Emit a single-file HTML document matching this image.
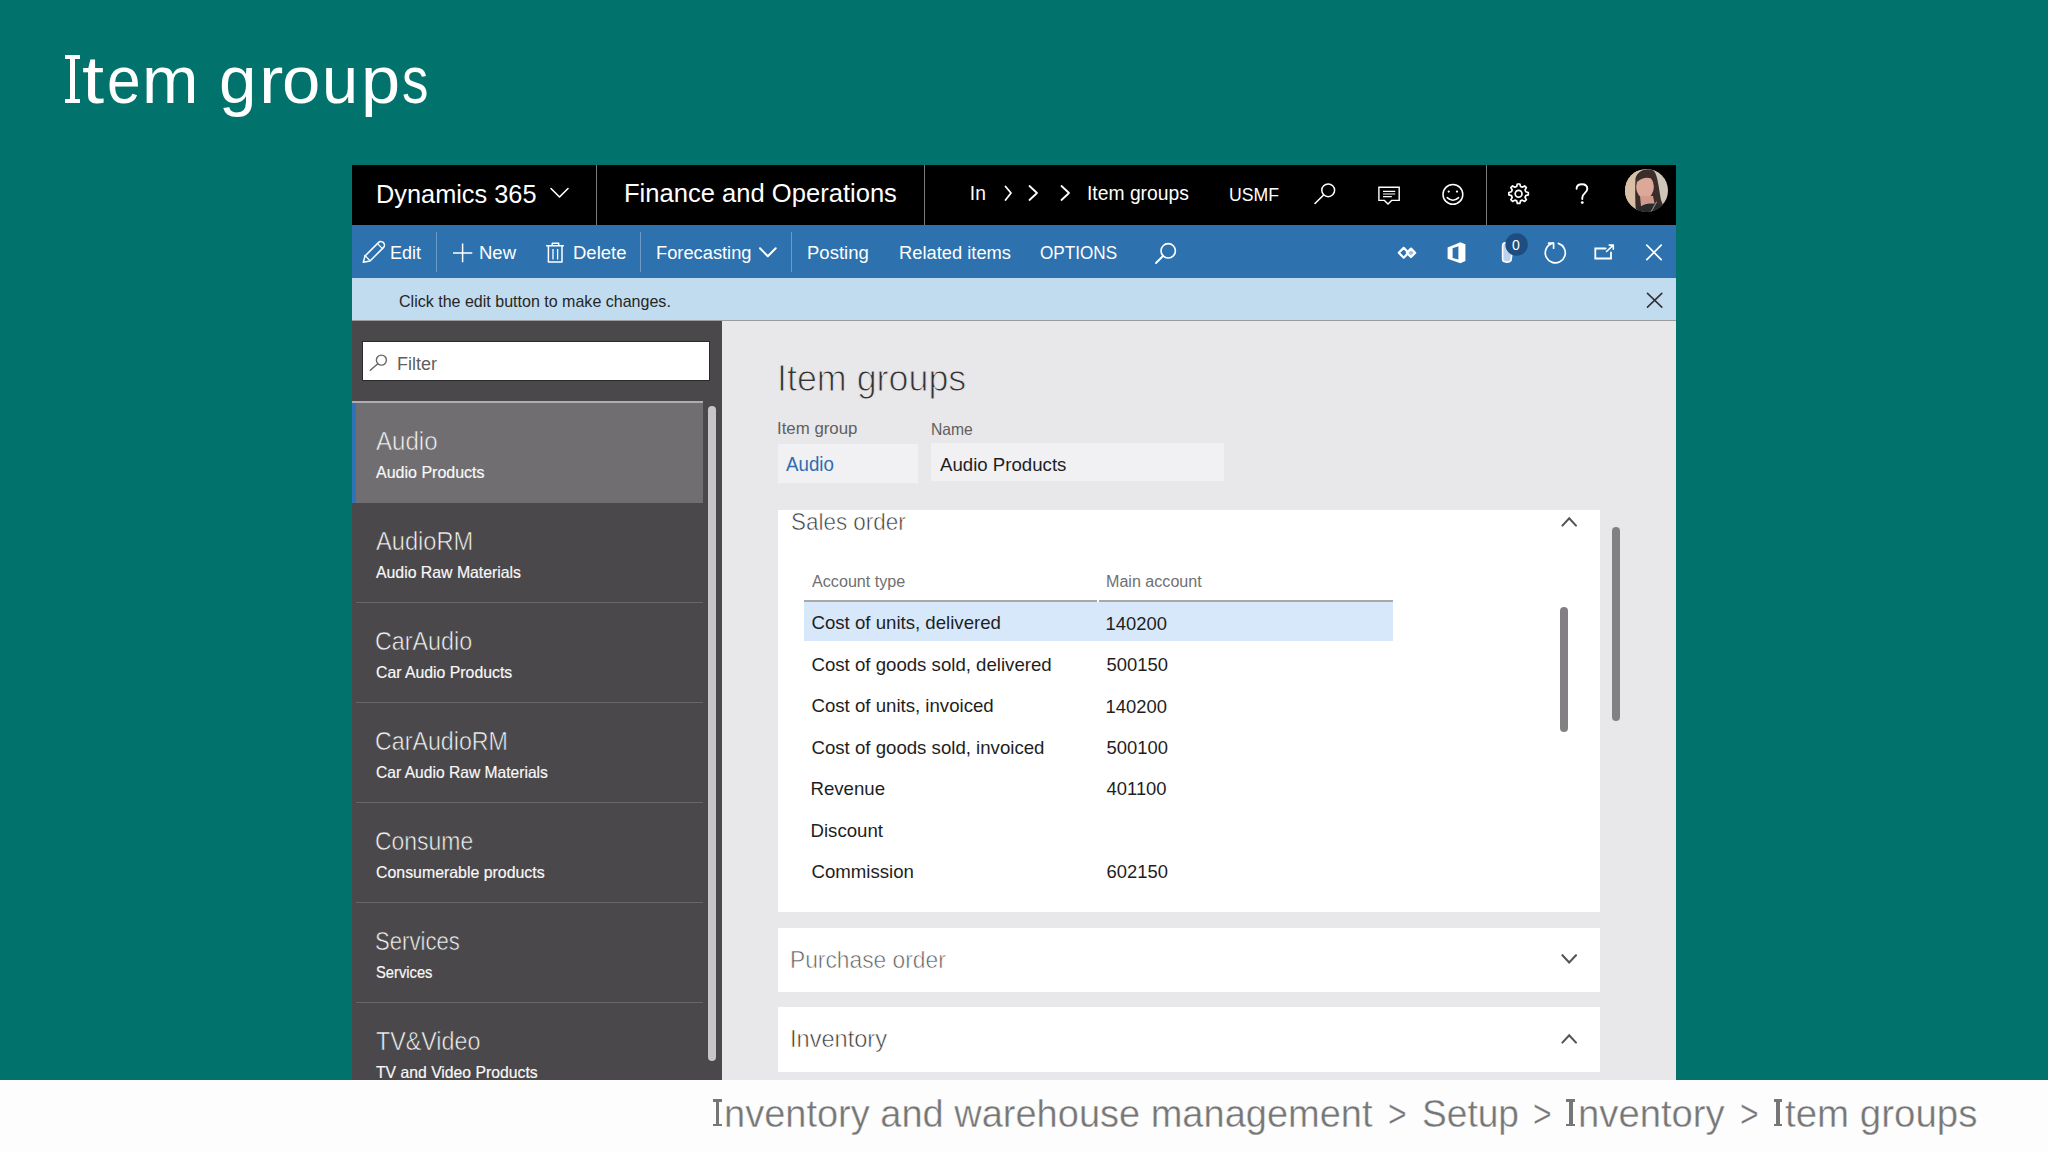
<!DOCTYPE html>
<html><head><meta charset="utf-8"><title>Item groups</title>
<style>
html,body{margin:0;padding:0;width:2048px;height:1152px;overflow:hidden;background:#01726C;}
body{position:relative;font-family:"Liberation Sans",sans-serif;}
.t{position:absolute;white-space:nowrap;font-family:"Liberation Sans",sans-serif;}
svg{position:absolute;overflow:visible;}
</style></head><body>
<div style="position:absolute;left:0px;top:0px;width:2048px;height:1080px;background:#01726C;"></div>
<div style="position:absolute;left:64.9px;top:54.9px;width:15.1px;height:4px;background:#FFFFFF;"></div>
<div style="position:absolute;left:64.9px;top:99.3px;width:15.1px;height:3.9px;background:#FFFFFF;"></div>
<div style="position:absolute;left:70.2px;top:54.9px;width:4.8px;height:48.3px;background:#FFFFFF;"></div>
<div class="t" style="left:81.79px;top:46.53px;font-size:66px;line-height:66px;color:#FFFFFF;font-weight:400;transform:scaleX(1.2059);transform-origin:0 0;">t</div>
<div class="t" style="left:106.57px;top:46.53px;font-size:66px;line-height:66px;color:#FFFFFF;font-weight:400;transform:scaleX(0.9156);transform-origin:0 0;">e</div>
<div class="t" style="left:141.89px;top:46.53px;font-size:66px;line-height:66px;color:#FFFFFF;font-weight:400;transform:scaleX(1.0277);transform-origin:0 0;">m</div>
<div class="t" style="left:219.16px;top:46.53px;font-size:66px;line-height:66px;color:#FFFFFF;font-weight:400;transform:scaleX(1.0194);transform-origin:0 0;">g</div>
<div class="t" style="left:258.58px;top:46.53px;font-size:66px;line-height:66px;color:#FFFFFF;font-weight:400;transform:scaleX(1.1059);transform-origin:0 0;">r</div>
<div class="t" style="left:282.41px;top:46.53px;font-size:66px;line-height:66px;color:#FFFFFF;font-weight:400;transform:scaleX(1.0437);transform-origin:0 0;">o</div>
<div class="t" style="left:321.87px;top:46.53px;font-size:66px;line-height:66px;color:#FFFFFF;font-weight:400;transform:scaleX(0.9828);transform-origin:0 0;">u</div>
<div class="t" style="left:360.93px;top:46.53px;font-size:66px;line-height:66px;color:#FFFFFF;font-weight:400;transform:scaleX(1.0667);transform-origin:0 0;">p</div>
<div class="t" style="left:402.20px;top:46.53px;font-size:66px;line-height:66px;color:#FFFFFF;font-weight:400;transform:scaleX(0.8000);transform-origin:0 0;">s</div>
<div style="position:absolute;left:352px;top:165px;width:1324px;height:60px;background:#000000;"></div>
<div style="position:absolute;left:352px;top:225px;width:1324px;height:53px;background:#2D72AE;"></div>
<div style="position:absolute;left:352px;top:278px;width:1324px;height:42px;background:#C1DBEF;"></div>
<div style="position:absolute;left:352px;top:320px;width:1324px;height:1px;background:#9C9C9C;"></div>
<div style="position:absolute;left:352px;top:321px;width:370px;height:759px;background:#4A484A;"></div>
<div style="position:absolute;left:722px;top:321px;width:954px;height:759px;background:#E8E7EA;"></div>
<div class="t" style="left:376.40px;top:181.72px;font-size:25.3px;line-height:25.3px;color:#FFFFFF;font-weight:400;transform:scaleX(1.0012);transform-origin:0 0;">Dynamics 365</div>
<div style="position:absolute;left:596px;top:165px;width:1px;height:60px;background:#7A7A7A;"></div>
<div class="t" style="left:624.20px;top:181.00px;font-size:25.56px;line-height:25.56px;color:#FFFFFF;font-weight:400;transform:scaleX(1.0008);transform-origin:0 0;">Finance and Operations</div>
<div style="position:absolute;left:924px;top:165px;width:1px;height:60px;background:#7A7A7A;"></div>
<div class="t" style="left:969.80px;top:184.39px;font-size:19.3px;line-height:19.3px;color:#FFFFFF;font-weight:400;">In</div>
<div class="t" style="left:1086.61px;top:184.29px;font-size:19.42px;line-height:19.42px;color:#FFFFFF;font-weight:400;transform:scaleX(0.9944);transform-origin:0 0;">Item groups</div>
<div class="t" style="left:1229.08px;top:185.28px;font-size:19.2px;line-height:19.2px;color:#FFFFFF;font-weight:400;transform:scaleX(0.9195);transform-origin:0 0;">USMF</div>
<div style="position:absolute;left:1486px;top:165px;width:1px;height:60px;background:#7A7A7A;"></div>
<div class="t" style="left:390.47px;top:243.28px;font-size:19.2px;line-height:19.2px;color:#FFFFFF;font-weight:400;transform:scaleX(0.9349);transform-origin:0 0;">Edit</div>
<div class="t" style="left:479.24px;top:243.18px;font-size:19.2px;line-height:19.2px;color:#FFFFFF;font-weight:400;transform:scaleX(0.9646);transform-origin:0 0;">New</div>
<div class="t" style="left:572.64px;top:243.18px;font-size:19.2px;line-height:19.2px;color:#FFFFFF;font-weight:400;transform:scaleX(0.9648);transform-origin:0 0;">Delete</div>
<div class="t" style="left:656.35px;top:243.18px;font-size:19.2px;line-height:19.2px;color:#FFFFFF;font-weight:400;transform:scaleX(0.9526);transform-origin:0 0;">Forecasting</div>
<div class="t" style="left:807.44px;top:243.48px;font-size:19.2px;line-height:19.2px;color:#FFFFFF;font-weight:400;transform:scaleX(0.9643);transform-origin:0 0;">Posting</div>
<div class="t" style="left:898.75px;top:243.48px;font-size:19.2px;line-height:19.2px;color:#FFFFFF;font-weight:400;transform:scaleX(0.9549);transform-origin:0 0;">Related items</div>
<div class="t" style="left:1040.30px;top:243.48px;font-size:19.2px;line-height:19.2px;color:#FFFFFF;font-weight:400;transform:scaleX(0.8930);transform-origin:0 0;">OPTIONS</div>
<div style="position:absolute;left:436px;top:232px;width:1px;height:40px;background:#6F9BC8;"></div>
<div style="position:absolute;left:640px;top:232px;width:1px;height:40px;background:#6F9BC8;"></div>
<div style="position:absolute;left:791px;top:232px;width:1px;height:40px;background:#6F9BC8;"></div>
<div class="t" style="left:399.20px;top:293.24px;font-size:16.4px;line-height:16.4px;color:#262626;font-weight:400;transform:scaleX(0.9782);transform-origin:0 0;">Click the edit button to make changes.</div>
<div style="position:absolute;left:362.6px;top:341.9px;width:346px;height:38.4px;background:#FFFFFF;box-shadow:0 0 0 1px #2a2a2a;"></div>
<div class="t" style="left:396.96px;top:353.88px;font-size:19.2px;line-height:19.2px;color:#5E5E5E;font-weight:400;transform:scaleX(0.9397);transform-origin:0 0;">Filter</div>
<div style="position:absolute;left:352px;top:401px;width:351px;height:102px;background:#706E70;"></div>
<div style="position:absolute;left:352px;top:401px;width:351px;height:2px;background:#ADACAE;"></div>
<div style="position:absolute;left:352px;top:403px;width:4px;height:100px;background:#2E72B8;"></div>
<div class="t" style="left:375.80px;top:428.95px;font-size:25.5px;line-height:25.5px;color:#F4F4F4;font-weight:400;-webkit-text-stroke:0.6px #706E70;transform:scaleX(0.9441);transform-origin:0 0;">Audio</div>
<div class="t" style="left:375.80px;top:464.26px;font-size:16.5px;line-height:16.5px;color:#F8F8F8;font-weight:400;-webkit-text-stroke:0.2px #F8F8F8;transform:scaleX(0.9700);transform-origin:0 0;">Audio Products</div>
<div class="t" style="left:375.80px;top:528.95px;font-size:25.5px;line-height:25.5px;color:#F4F4F4;font-weight:400;-webkit-text-stroke:0.6px #4A484A;transform:scaleX(0.9273);transform-origin:0 0;">AudioRM</div>
<div class="t" style="left:375.80px;top:564.26px;font-size:16.5px;line-height:16.5px;color:#F8F8F8;font-weight:400;-webkit-text-stroke:0.2px #F8F8F8;transform:scaleX(0.9585);transform-origin:0 0;">Audio Raw Materials</div>
<div style="position:absolute;left:356px;top:602px;width:347px;height:1px;background:#68666A;"></div>
<div class="t" style="left:374.89px;top:628.95px;font-size:25.5px;line-height:25.5px;color:#F4F4F4;font-weight:400;-webkit-text-stroke:0.6px #4A484A;transform:scaleX(0.9141);transform-origin:0 0;">CarAudio</div>
<div class="t" style="left:375.80px;top:664.26px;font-size:16.5px;line-height:16.5px;color:#F8F8F8;font-weight:400;-webkit-text-stroke:0.2px #F8F8F8;transform:scaleX(0.9579);transform-origin:0 0;">Car Audio Products</div>
<div style="position:absolute;left:356px;top:702px;width:347px;height:1px;background:#68666A;"></div>
<div class="t" style="left:374.89px;top:728.95px;font-size:25.5px;line-height:25.5px;color:#F4F4F4;font-weight:400;-webkit-text-stroke:0.6px #4A484A;transform:scaleX(0.9108);transform-origin:0 0;">CarAudioRM</div>
<div class="t" style="left:375.80px;top:764.26px;font-size:16.5px;line-height:16.5px;color:#F8F8F8;font-weight:400;-webkit-text-stroke:0.2px #F8F8F8;transform:scaleX(0.9466);transform-origin:0 0;">Car Audio Raw Materials</div>
<div style="position:absolute;left:356px;top:802px;width:347px;height:1px;background:#68666A;"></div>
<div class="t" style="left:374.90px;top:828.95px;font-size:25.5px;line-height:25.5px;color:#F4F4F4;font-weight:400;-webkit-text-stroke:0.6px #4A484A;transform:scaleX(0.9004);transform-origin:0 0;">Consume</div>
<div class="t" style="left:375.80px;top:864.26px;font-size:16.5px;line-height:16.5px;color:#F8F8F8;font-weight:400;-webkit-text-stroke:0.2px #F8F8F8;transform:scaleX(0.9627);transform-origin:0 0;">Consumerable products</div>
<div style="position:absolute;left:356px;top:902px;width:347px;height:1px;background:#68666A;"></div>
<div class="t" style="left:374.93px;top:928.95px;font-size:25.5px;line-height:25.5px;color:#F4F4F4;font-weight:400;-webkit-text-stroke:0.6px #4A484A;transform:scaleX(0.8674);transform-origin:0 0;">Services</div>
<div class="t" style="left:375.80px;top:964.26px;font-size:16.5px;line-height:16.5px;color:#F8F8F8;font-weight:400;-webkit-text-stroke:0.2px #F8F8F8;transform:scaleX(0.8918);transform-origin:0 0;">Services</div>
<div style="position:absolute;left:356px;top:1002px;width:347px;height:1px;background:#68666A;"></div>
<div class="t" style="left:375.80px;top:1028.95px;font-size:25.5px;line-height:25.5px;color:#F4F4F4;font-weight:400;-webkit-text-stroke:0.6px #4A484A;transform:scaleX(0.9127);transform-origin:0 0;">TV&amp;Video</div>
<div class="t" style="left:375.80px;top:1064.26px;font-size:16.5px;line-height:16.5px;color:#F8F8F8;font-weight:400;-webkit-text-stroke:0.2px #F8F8F8;transform:scaleX(0.9543);transform-origin:0 0;">TV and Video Products</div>
<div style="position:absolute;left:708px;top:406px;width:8px;height:655px;background:#C6C5C8;border-radius:4px;"></div>
<div class="t" style="left:776.53px;top:359.71px;font-size:37.5px;line-height:37.5px;color:#333333;font-weight:400;-webkit-text-stroke:1.0px #E8E7EA;transform:scaleX(0.9559);transform-origin:0 0;">Item groups</div>
<div class="t" style="left:776.61px;top:420.86px;font-size:16.97px;line-height:16.97px;color:#606060;font-weight:400;transform:scaleX(0.9923);transform-origin:0 0;">Item group</div>
<div class="t" style="left:931.05px;top:421.26px;font-size:16.5px;line-height:16.5px;color:#606060;font-weight:400;transform:scaleX(0.9501);transform-origin:0 0;">Name</div>
<div style="position:absolute;left:777.5px;top:443.5px;width:140px;height:39.5px;background:#F1F0F3;"></div>
<div style="position:absolute;left:931px;top:442.8px;width:293px;height:38.6px;background:#F1F0F3;"></div>
<div class="t" style="left:786.10px;top:455.04px;font-size:19.6px;line-height:19.6px;color:#2F6DB1;font-weight:400;transform:scaleX(0.9559);transform-origin:0 0;">Audio</div>
<div class="t" style="left:939.60px;top:455.38px;font-size:19.2px;line-height:19.2px;color:#1E1E1E;font-weight:400;transform:scaleX(0.9712);transform-origin:0 0;">Audio Products</div>
<div style="position:absolute;left:777.5px;top:509.5px;width:822.3px;height:402.8px;background:#FFFFFF;"></div>
<div class="t" style="left:790.68px;top:509.90px;font-size:24.5px;line-height:24.5px;color:#3A3A3A;font-weight:400;-webkit-text-stroke:0.6px #FFFFFF;transform:scaleX(0.9160);transform-origin:0 0;">Sales order</div>
<div class="t" style="left:811.50px;top:574.12px;font-size:15.6px;line-height:15.6px;color:#707070;font-weight:400;transform:scaleX(1.0349);transform-origin:0 0;">Account type</div>
<div class="t" style="left:1105.57px;top:574.22px;font-size:15.6px;line-height:15.6px;color:#707070;font-weight:400;transform:scaleX(1.0323);transform-origin:0 0;">Main account</div>
<div style="position:absolute;left:804px;top:600px;width:292.6px;height:2px;background:#A8A8A8;"></div>
<div style="position:absolute;left:1098.6px;top:600px;width:294.8px;height:2px;background:#A8A8A8;"></div>
<div style="position:absolute;left:804px;top:602px;width:589.4px;height:39px;background:#D8E8FB;"></div>
<div class="t" style="left:811.50px;top:614.45px;font-size:18.64px;line-height:18.64px;color:#1E1E1E;font-weight:400;">Cost of units, delivered</div>
<div class="t" style="left:1105.60px;top:614.66px;font-size:18.39px;line-height:18.39px;color:#1E1E1E;font-weight:400;">140200</div>
<div class="t" style="left:811.50px;top:655.90px;font-size:18.64px;line-height:18.64px;color:#1E1E1E;font-weight:400;">Cost of goods sold, delivered</div>
<div class="t" style="left:1106.60px;top:656.11px;font-size:18.39px;line-height:18.39px;color:#1E1E1E;font-weight:400;">500150</div>
<div class="t" style="left:811.50px;top:697.35px;font-size:18.64px;line-height:18.64px;color:#1E1E1E;font-weight:400;">Cost of units, invoiced</div>
<div class="t" style="left:1105.60px;top:697.56px;font-size:18.39px;line-height:18.39px;color:#1E1E1E;font-weight:400;">140200</div>
<div class="t" style="left:811.50px;top:738.80px;font-size:18.64px;line-height:18.64px;color:#1E1E1E;font-weight:400;">Cost of goods sold, invoiced</div>
<div class="t" style="left:1106.60px;top:739.01px;font-size:18.39px;line-height:18.39px;color:#1E1E1E;font-weight:400;">500100</div>
<div class="t" style="left:810.50px;top:780.25px;font-size:18.64px;line-height:18.64px;color:#1E1E1E;font-weight:400;">Revenue</div>
<div class="t" style="left:1106.60px;top:780.46px;font-size:18.39px;line-height:18.39px;color:#1E1E1E;font-weight:400;">401100</div>
<div class="t" style="left:810.50px;top:821.70px;font-size:18.64px;line-height:18.64px;color:#1E1E1E;font-weight:400;">Discount</div>
<div class="t" style="left:811.50px;top:863.15px;font-size:18.64px;line-height:18.64px;color:#1E1E1E;font-weight:400;">Commission</div>
<div class="t" style="left:1106.60px;top:863.36px;font-size:18.39px;line-height:18.39px;color:#1E1E1E;font-weight:400;">602150</div>
<div style="position:absolute;left:1560px;top:607px;width:8px;height:125.2px;background:#828083;border-radius:4px;"></div>
<div style="position:absolute;left:1612px;top:527px;width:8px;height:193.5px;background:#828083;border-radius:4px;"></div>
<div style="position:absolute;left:777.5px;top:927.5px;width:822.3px;height:64.3px;background:#FFFFFF;"></div>
<div class="t" style="left:790.14px;top:947.80px;font-size:24.5px;line-height:24.5px;color:#606060;font-weight:400;-webkit-text-stroke:0.6px #FFFFFF;transform:scaleX(0.9296);transform-origin:0 0;">Purchase order</div>
<div style="position:absolute;left:777.5px;top:1006.7px;width:822.3px;height:65px;background:#FFFFFF;"></div>
<div class="t" style="left:790.07px;top:1026.70px;font-size:24.5px;line-height:24.5px;color:#3A3A3A;font-weight:400;-webkit-text-stroke:0.6px #FFFFFF;transform:scaleX(0.9626);transform-origin:0 0;">Inventory</div>
<svg width="2048" height="1152" viewBox="0 0 2048 1152" style="left:0;top:0;" fill="none" stroke-linecap="round" stroke-linejoin="round">
 <!-- top bar -->
 <g stroke="#FFFFFF" stroke-width="1.6">
  <path d="M551 188.5 L559.5 197 L568 188.5"/>
  <path d="M1005.5 186.5 L1011 193 L1005.5 200" stroke-width="1.8"/>
  <path d="M1029.5 186 L1037 193 L1029.5 200" stroke-width="1.8"/>
  <path d="M1061.5 186 L1069 193 L1061.5 200" stroke-width="1.8"/>
  <circle cx="1328.2" cy="190.3" r="6.4" stroke-width="1.5"/>
  <path d="M1323.6 195 L1315 203.5" stroke-width="1.6"/>
  <path d="M1378.9 187.2 H1399.2 V200.4 H1391.6 L1388 204 L1384.4 200.4 H1378.9 Z" stroke-width="1.4" stroke-linejoin="miter"/>
  <path d="M1383 191.3 H1395.2 M1383 194 H1395.2 M1383 196.7 H1391.8" stroke-width="1.2" stroke-linecap="butt"/>
  <circle cx="1452.9" cy="194.4" r="9.9" stroke-width="1.5"/>
  <path d="M1447.2 197.6 Q1452.9 203 1458.6 197.6" stroke-width="1.5"/>
  <circle cx="1448.7" cy="191.6" r="1.1" fill="#fff" stroke="none"/>
  <circle cx="1457" cy="191.6" r="1.1" fill="#fff" stroke="none"/>
  <circle cx="1518.6" cy="193.7" r="3.4" stroke-width="1.7"/>
  <path d="M1517.37 183.98 L1519.83 183.98 L1520.55 186.56 L1522.27 187.27 L1524.61 185.96 L1526.34 187.69 L1525.03 190.03 L1525.74 191.75 L1528.32 192.47 L1528.32 194.93 L1525.74 195.65 L1525.03 197.37 L1526.34 199.71 L1524.61 201.44 L1522.27 200.13 L1520.55 200.84 L1519.83 203.42 L1517.37 203.42 L1516.65 200.84 L1514.93 200.13 L1512.59 201.44 L1510.86 199.71 L1512.17 197.37 L1511.46 195.65 L1508.88 194.93 L1508.88 192.47 L1511.46 191.75 L1512.17 190.03 L1510.86 187.69 L1512.59 185.96 L1514.93 187.27 L1516.65 186.56 Z" stroke-width="1.7"/>
  <path d="M1576.6 188.8 C1576.6 185.5 1579 184.3 1582 184.3 C1585.3 184.3 1587.3 186.3 1587.3 189 C1587.3 192.6 1582.3 193.8 1582.3 197.5 V199" stroke-width="1.9"/>
  <circle cx="1582.3" cy="202.6" r="1.4" fill="#fff" stroke="none"/>
 </g>
 <!-- avatar -->
 <defs>
  <clipPath id="av"><circle cx="1646.5" cy="190.4" r="21.5"/></clipPath>
  <radialGradient id="face" cx="0.5" cy="0.45" r="0.5"><stop offset="0" stop-color="#e2a08c"/><stop offset="0.7" stop-color="#c98b76"/><stop offset="1" stop-color="#9c6a5a"/></radialGradient>
 </defs>
 <g clip-path="url(#av)" stroke="none">
  <rect x="1625" y="168" width="44" height="45" fill="#cdc6b8"/>
  <rect x="1625" y="168" width="12" height="45" fill="#d9bfa5"/>
  <path d="M1635.5 178 C1638 170 1648 167 1654 171 C1658 176 1659 190 1661 200 C1663 206 1666 210 1668 213 L1636 213 C1635 200 1635 188 1635.5 178 Z" fill="#3b2d29"/>
  <ellipse cx="1645" cy="186.8" rx="8.9" ry="11.5" fill="#dca899"/>
  <path d="M1637.2 182 C1638 176 1642 173.5 1646 173.5 C1651 173.5 1653.5 176 1654 180 C1650 177 1643 176.5 1637.2 182 Z" fill="#3b2d29"/>
  <path d="M1640 196 H1653 L1655 206 H1641 Z" fill="#d09a8e"/>
  <path d="M1636 213 C1638 207 1643 204 1650 203.5 C1656 203 1662 205 1668 209 L1668 213 Z" fill="#2b2a2b"/>
  <path d="M1651 212 L1656.5 202" stroke="#8a8a8a" stroke-width="1.1"/>
 </g>
 <!-- action bar -->
 <g stroke="#FFFFFF" stroke-width="1.5">
  <path d="M364.5 261.5 L366.2 255.2 L379.6 241.8 C381 240.4 383.4 240.6 384.6 241.8 C385.8 243 386 245.4 384.6 246.8 L371.2 260.2 Z" transform="translate(-1.2 0.8)"/>
  <path d="M366 254.6 L370.6 259.2 M378.7 242.8 L383.4 247.5" transform="translate(-1.2 0.8)" stroke-width="1.2"/>
  <path d="M462.6 243.4 V262.3 M453 252.9 H472.3" stroke-width="1.5" stroke-linecap="butt"/>
  <path d="M546.6 245.7 H563.4 M552.3 245.5 V243.3 H558.7 V245.5 M548.4 245.8 V261.9 H562 V245.8" stroke-width="1.5"/>
  <path d="M553 249 V259.5 M557.6 249 V259.5" stroke-width="1.3" stroke-linecap="butt"/>
  <path d="M760 248.3 L767.8 256.3 L775.7 248.3" stroke-width="2"/>
  <circle cx="1168.2" cy="250.8" r="7.2" stroke-width="1.6"/>
  <path d="M1163 256 L1156 263" stroke-width="1.8"/>
  <path d="M1403.7 247.9 L1408.6 252.8 L1403.7 257.7 L1398.8 252.8 Z" stroke-width="2.2"/>
  <path d="M1411 248.6 L1415.2 252.8 L1411 257 L1406.8 252.8 Z" stroke-width="2.2" fill="#9CC0E4"/>
  <path d="M1401 257 C1401 261.5 1506.5 263 1506 263" stroke="none"/>
  <circle cx="1555.3" cy="252.9" r="10" stroke-width="1.7" stroke-dasharray="57.2 5.6" transform="rotate(-72 1555.3 252.9)"/>
  <path d="M1548.6 243.2 L1553.6 243.2 L1553.6 248.2" stroke-width="1.7"/>
  <path d="M1605.6 248.5 H1595.3 V258.5 H1611 V252.5" stroke-width="1.8" stroke-linejoin="miter"/>
  <path d="M1606.5 251.5 L1613 245.3 M1609.2 245.1 H1613.3 V249.2" stroke-width="1.6"/>
  <path d="M1646.8 245.2 L1661.2 259.6 M1661.2 245.2 L1646.8 259.6" stroke-width="1.7"/>
 </g>
 <!-- office logo -->
 <path d="M1447.6 247.4 L1460.4 242.3 L1465.4 244.3 V261 L1460.4 263.2 L1447.6 258.8 Z M1452.6 248.2 V258.1 L1458.4 259.4 V246.3 Z" fill="#FFFFFF" fill-rule="evenodd"/>
 <!-- paperclip + badge -->
 <path d="M1502.6 246 C1502.6 243.5 1504 242.8 1505.5 242.8 L1512 252 L1511.2 259.3 C1510.8 263 1502.6 263 1502.6 259.3 Z" stroke="#FFFFFF" stroke-width="1.6" fill="#BBD3EC"/>
 <circle cx="1516.6" cy="244.5" r="11.2" fill="#1D4E7F"/>
 <text x="1516" y="250.4" font-family="Liberation Sans" font-size="14" fill="#FFFFFF" text-anchor="middle">0</text>
 <!-- info bar close -->
 <path d="M1647.5 293.3 L1661.8 307.1 M1661.8 293.3 L1647.5 307.1" stroke="#333333" stroke-width="1.6" stroke-linecap="round"/>
 <!-- filter search -->
 <circle cx="381.4" cy="360.1" r="5" stroke="#666" stroke-width="1.4" fill="none"/>
 <path d="M377.8 363.7 L370.3 370.2" stroke="#666" stroke-width="1.5" stroke-linecap="round"/>
 <!-- content chevrons -->
 <g stroke="#555555" stroke-width="2.1" fill="none" stroke-linecap="round" stroke-linejoin="miter">
  <path d="M1562.4 525.6 L1569.2 518.4 L1576 525.6"/>
  <path d="M1562.4 955.2 L1569.2 962.4 L1576 955.2"/>
  <path d="M1562.4 1042.6 L1569.2 1035.2 L1576 1042.6"/>
 </g>
</svg>

<div style="position:absolute;left:0px;top:1080px;width:2048px;height:72px;background:#FDFDFD;"></div>
<div class="t" style="left:723.64px;top:1094.80px;font-size:38.7px;line-height:38.7px;color:#767676;font-weight:400;-webkit-text-stroke:0.4px #FDFDFD;transform:scaleX(0.9822);transform-origin:0 0;">nventory and warehouse management</div>
<div class="t" style="left:1388.08px;top:1094.80px;font-size:38.7px;line-height:38.7px;color:#767676;font-weight:400;-webkit-text-stroke:0.4px #FDFDFD;transform:scaleX(0.8250);transform-origin:0 0;">&gt;</div>
<div class="t" style="left:1421.54px;top:1094.80px;font-size:38.7px;line-height:38.7px;color:#767676;font-weight:400;-webkit-text-stroke:0.4px #FDFDFD;transform:scaleX(0.9596);transform-origin:0 0;">Setup</div>
<div class="t" style="left:1532.77px;top:1094.80px;font-size:38.7px;line-height:38.7px;color:#767676;font-weight:400;-webkit-text-stroke:0.4px #FDFDFD;transform:scaleX(0.8250);transform-origin:0 0;">&gt;</div>
<div class="t" style="left:1578.32px;top:1094.80px;font-size:38.7px;line-height:38.7px;color:#767676;font-weight:400;-webkit-text-stroke:0.4px #FDFDFD;transform:scaleX(0.9888);transform-origin:0 0;">nventory</div>
<div class="t" style="left:1740.08px;top:1094.80px;font-size:38.7px;line-height:38.7px;color:#767676;font-weight:400;-webkit-text-stroke:0.4px #FDFDFD;transform:scaleX(0.8250);transform-origin:0 0;">&gt;</div>
<div class="t" style="left:1785.40px;top:1094.80px;font-size:38.7px;line-height:38.7px;color:#767676;font-weight:400;-webkit-text-stroke:0.4px #FDFDFD;transform:scaleX(0.9943);transform-origin:0 0;">tem groups</div>
<div style="position:absolute;left:713.2px;top:1099.3px;width:8.9px;height:2.4px;background:#767676;"></div>
<div style="position:absolute;left:713.2px;top:1123.7px;width:8.9px;height:2.4px;background:#767676;"></div>
<div style="position:absolute;left:715.95px;top:1099.3px;width:3.4px;height:26.8px;background:#767676;"></div>
<div style="position:absolute;left:1566.4px;top:1099.3px;width:8.9px;height:2.4px;background:#767676;"></div>
<div style="position:absolute;left:1566.4px;top:1123.7px;width:8.9px;height:2.4px;background:#767676;"></div>
<div style="position:absolute;left:1569.15px;top:1099.3px;width:3.4px;height:26.8px;background:#767676;"></div>
<div style="position:absolute;left:1773.6px;top:1099.3px;width:8.9px;height:2.4px;background:#767676;"></div>
<div style="position:absolute;left:1773.6px;top:1123.7px;width:8.9px;height:2.4px;background:#767676;"></div>
<div style="position:absolute;left:1776.35px;top:1099.3px;width:3.4px;height:26.8px;background:#767676;"></div>
</body></html>
